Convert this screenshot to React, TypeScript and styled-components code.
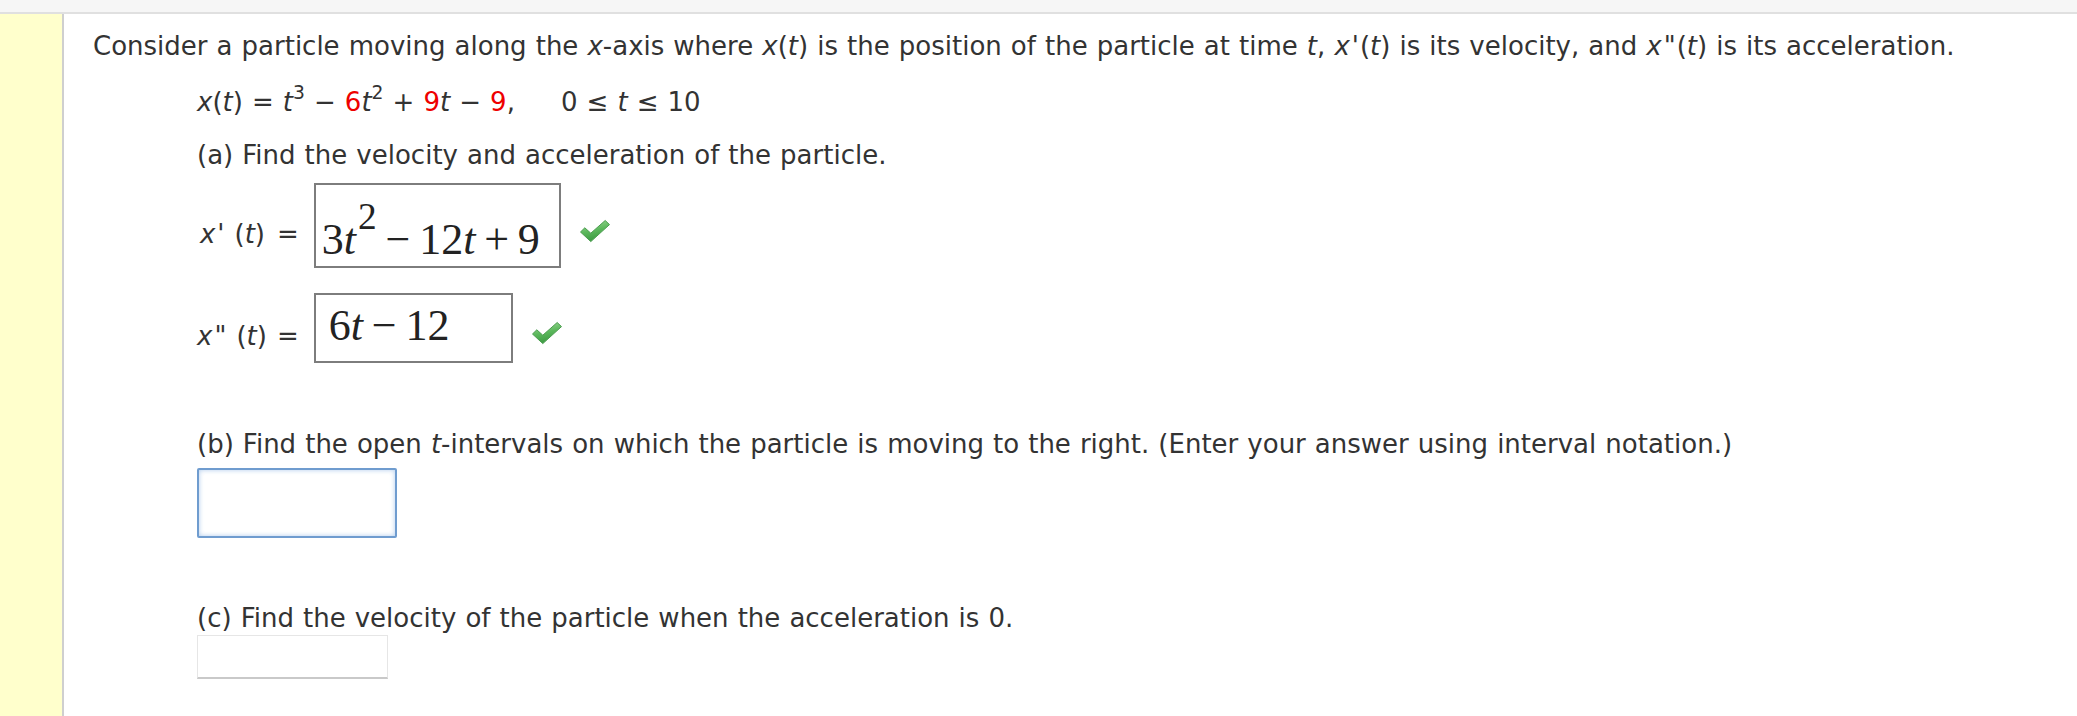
import styled, { createGlobalStyle } from 'styled-components';

const GlobalStyle = createGlobalStyle`
  html, body {
    margin: 0;
    padding: 0;
    background: #fff;
  }
  body {
    font-family: "DejaVu Sans", Verdana, sans-serif;
    color: #333;
  }
`;

function CheckMark() {
  return (
    <CheckIcon viewBox="0 0 32 24" width="32" height="24">
      <defs>
        <linearGradient id="okGrad" x1="0" y1="0" x2="0.3" y2="1">
          <stop offset="0" stopColor="#a6dc9f" />
          <stop offset="0.55" stopColor="#5cb85c" />
          <stop offset="1" stopColor="#3d9a43" />
        </linearGradient>
      </defs>
      <path
        d="M1.5 13 L5.8 8.8 L11.8 14.2 L26.2 1.5 L30.5 5.6 L11.8 22.6 Z"
        fill="url(#okGrad)"
        stroke="#4b9d4f"
        strokeWidth="1"
        strokeLinejoin="round"
      />
    </CheckIcon>
  );
}

function App() {
  return (
    <Page>
      <GlobalStyle />
      <TopBar />
      <Body>
        <Gutter />
        <Content>
          <Intro>
            Consider a particle moving along the <I>x</I>-axis where <I>x</I>(<I>t</I>) is the position of the
            particle at time <I>t</I>, <I>x</I>
            <Prime>'</Prime>(<I>t</I>) is its velocity, and <I>x</I>
            <Prime>"</Prime>(<I>t</I>) is its acceleration.
          </Intro>
          <Indented>
            <Line $top={26}>
              <I>x</I>(<I>t</I>) = <I>t</I><Sup>3</Sup> − <Red>6</Red><I>t</I><Sup>2</Sup> + <Red>9</Red><I>t</I> −{' '}
              <Red>9</Red>,<Range>0 ≤ <I>t</I> ≤ 10</Range>
            </Line>
            <Line $top={23}>(a) Find the velocity and acceleration of the particle.</Line>

            <AnswerRow $top={13}>
              <Label>
                <I>x</I>
                <Prime>'</Prime> (<I>t</I>)
              </Label>
              <Eq>=</Eq>
              <MathBox $w={247} $h={85} $pl={6} $pb={4}>
                <MathLine>
                  3<MI>t</MI>
                  <MSup>2</MSup>
                  <Op>−</Op>12<MI>t</MI>
                  <Op>+</Op>9
                </MathLine>
              </MathBox>
              <CheckCell>
                <CheckMark />
              </CheckCell>
            </AnswerRow>

            <AnswerRow $top={25}>
              <Label>
                <I>x</I>
                <Prime>"</Prime> (<I>t</I>)
              </Label>
              <Eq>=</Eq>
              <MathBox $w={199} $h={70} $pl={13} $pb={13}>
                <MathLine>
                  6<MI>t</MI>
                  <Op>−</Op>12
                </MathLine>
              </MathBox>
              <CheckCell>
                <CheckMark />
              </CheckCell>
            </AnswerRow>

            <Line $top={66}>
              (b) Find the open <I>t</I>-intervals on which the particle is moving to the right. (Enter your answer
              using interval notation.)
            </Line>
            <FocusedInput />

            <Line $top={65}>(c) Find the velocity of the particle when the acceleration is 0.</Line>
            <PlainInput />
          </Indented>
        </Content>
      </Body>
    </Page>
  );
}

export default App;

const Page = styled.div`
  min-height: 100vh;
  display: flex;
  flex-direction: column;
`;

const TopBar = styled.div`
  height: 12px;
  background: #f6f6f6;
  border-bottom: 2px solid #e0e0e0;
`;

const Body = styled.div`
  flex: 1;
  display: flex;
`;

const Gutter = styled.div`
  width: 62px;
  background: #ffffcc;
  border-right: 2px solid #cfcfcf;
`;

const Content = styled.div`
  flex: 1;
  padding: 17px 0 40px 29px;
  font-size: 26px;
  line-height: 30px;
  word-spacing: 0.8px;
  white-space: nowrap;
`;

const Intro = styled.div``;

const Indented = styled.div`
  margin-left: 104px;
`;

const Line = styled.div<{ $top: number }>`
  margin-top: ${(p) => p.$top}px;
`;

const I = styled.i`
  font-style: italic;
`;

const Prime = styled.span`
  font-style: italic;
  margin: 0 1px 0 2px;
`;

const Red = styled.span`
  color: #ee0000;
`;

const Sup = styled.sup`
  font-size: 0.72em;
  line-height: 0;
  vertical-align: 0.62em;
`;

const Range = styled.span`
  margin-left: 46px;
`;

const AnswerRow = styled.div<{ $top: number }>`
  margin-top: ${(p) => p.$top}px;
  display: flex;
  align-items: center;
`;

const Label = styled.span`
  width: 68px;
  text-align: right;
  padding-top: 16px;
`;

const Eq = styled.span`
  margin: 0 15px 0 12px;
  padding-top: 16px;
`;

const MathBox = styled.div<{ $w: number; $h: number; $pl: number; $pb: number }>`
  box-sizing: border-box;
  width: ${(p) => p.$w}px;
  height: ${(p) => p.$h}px;
  border: 2px solid #7d7d7d;
  padding: 0 0 ${(p) => p.$pb}px ${(p) => p.$pl}px;
  display: flex;
  align-items: flex-end;
  font-family: "Liberation Serif", "Times New Roman", serif;
  font-size: 44px;
  line-height: 1;
  word-spacing: 0;
  color: #222;
`;

const MathLine = styled.span`
  display: block;
  line-height: 1;
`;

const MI = styled.i`
  font-style: italic;
`;

const MSup = styled.span`
  font-size: 0.85em;
  line-height: 0;
  vertical-align: 0.66em;
  margin-left: 2px;
`;

const Op = styled.span`
  margin: 0 0.2em;
`;

const CheckCell = styled.span`
  margin-left: 18px;
  padding-top: 10px;
  display: flex;
`;

const CheckIcon = styled.svg`
  display: block;
`;

const FocusedInput = styled.div`
  box-sizing: border-box;
  margin-top: 9px;
  width: 200px;
  height: 70px;
  border: 2px solid #6f9ccf;
  border-radius: 2px;
  box-shadow: inset 0 0 5px rgba(110, 160, 220, 0.55);
  background: #fff;
`;

const PlainInput = styled.div`
  box-sizing: border-box;
  margin-top: 2px;
  width: 191px;
  height: 44px;
  border: 1px solid #e6e6e6;
  border-bottom: 2px solid #c9c9c9;
  background: #fff;
`;
